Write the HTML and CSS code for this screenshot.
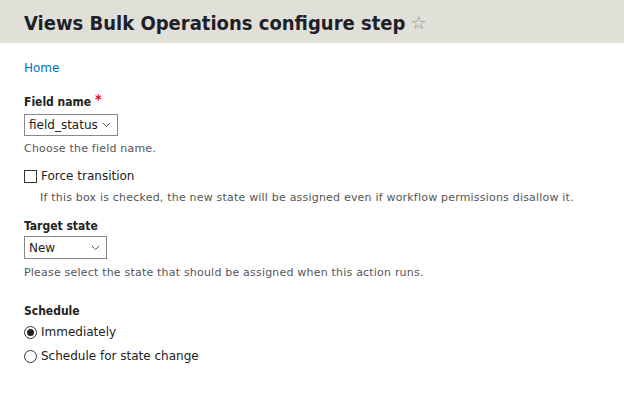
FILE: index.html
```html
<!DOCTYPE html>
<html>
<head>
<meta charset="utf-8">
<link rel="stylesheet" href="styles.css">
</head>
<body>
<header class="page-header">
  <h1 class="title">Views Bulk Operations configure step</h1>
  <span class="star">&#9734;</span>
</header>
<main class="content">
  <nav class="breadcrumb"><a href="#">Home</a></nav>
  <form class="form">
    <div class="item item-field">
      <label class="label">Field name <span class="req">*</span></label>
      <div class="select select-field">field_status <span class="chev"><svg width="9" height="6" viewBox="0 0 9 6"><path d="M1 1 L4.5 4.5 L8 1" fill="none" stroke="#555" stroke-width="1"/></svg></span></div>
      <div class="desc desc-first">Choose the field name.</div>
    </div>
    <div class="item item-check">
      <div class="check-row"><span class="checkbox"></span><span class="option">Force transition</span></div>
      <div class="desc indent">If this box is checked, the new state will be assigned even if workflow permissions disallow it.</div>
    </div>
    <div class="item item-state">
      <label class="label label-tight">Target state</label>
      <div class="select select-state">New <span class="chev"><svg width="9" height="6" viewBox="0 0 9 6"><path d="M1 1 L4.5 4.5 L8 1" fill="none" stroke="#555" stroke-width="1"/></svg></span></div>
      <div class="desc">Please select the state that should be assigned when this action runs.</div>
    </div>
    <div class="item item-schedule">
      <div class="label label-tight">Schedule</div>
      <div class="radio-row first"><span class="radio checked"></span><span class="option">Immediately</span></div>
      <div class="radio-row"><span class="radio"></span><span class="option">Schedule for state change</span></div>
    </div>
  </form>
</main>
</body>
</html>
```
FILE: styles.css
```css
html, body { margin: 0; padding: 0; background: #fff; }
body { font-family: "DejaVu Sans", Verdana, sans-serif; color: #222; font-size: 12px; line-height: 16px; }
.page-header { background: #e0e0d8; height: 43px; padding: 3px 24px 0; display: flex; align-items: center; gap: 5px; box-sizing: border-box; }
.title { margin: 0; font-family: "DejaVu Sans Condensed", "DejaVu Sans", sans-serif; font-size: 20px; line-height: 24px; font-weight: bold; color: #1f1f28; }
.star { font-family: "DejaVu Sans", sans-serif; font-weight: normal; color: #8e8e86; font-size: 18px; line-height: 24px; }
.content { padding: 17px 24px 0; }
.breadcrumb a { color: #0074bd; text-decoration: none; font-size: 12px; }
.form { margin-top: 18px; }
.label { display: block; font-family: "DejaVu Sans Condensed", "DejaVu Sans", sans-serif; font-weight: bold; font-size: 12px; line-height: 16px; height: 16px; margin-bottom: 4px; }
.label-tight { margin-bottom: 2px; }
.req { color: #e00; font-size: 14px; line-height: 0; position: relative; top: -2px; }
.select { display: flex; align-items: center; justify-content: space-between; border: 1px solid #888; height: 22px; box-sizing: border-box; padding: 0 6px 0 4px; font-size: 12px; }
.select-field { width: 94px; }
.select-state { width: 83px; height: 23px; }
.chev { display: flex; }
.desc { font-size: 11px; color: #555; margin-top: 6px; letter-spacing: 0.2px; }
.desc-first { margin-top: 5px; }
.indent { margin-left: 16px; }
.item-check { margin-top: 11px; }
.item-state { margin-top: 12px; }
.item-schedule { margin-top: 22px; }
.check-row, .radio-row { display: flex; align-items: center; gap: 4px; }
.checkbox { width: 11px; height: 11px; border: 1px solid #333; }
.radio { width: 11px; height: 11px; border: 1px solid #333; border-radius: 50%; position: relative; }
.radio.checked::after { content: ""; position: absolute; left: 2px; top: 2px; width: 7px; height: 7px; border-radius: 50%; background: #222; }
.radio-row.first { margin-top: 5px; }
.radio-row { margin-top: 8px; }
```
